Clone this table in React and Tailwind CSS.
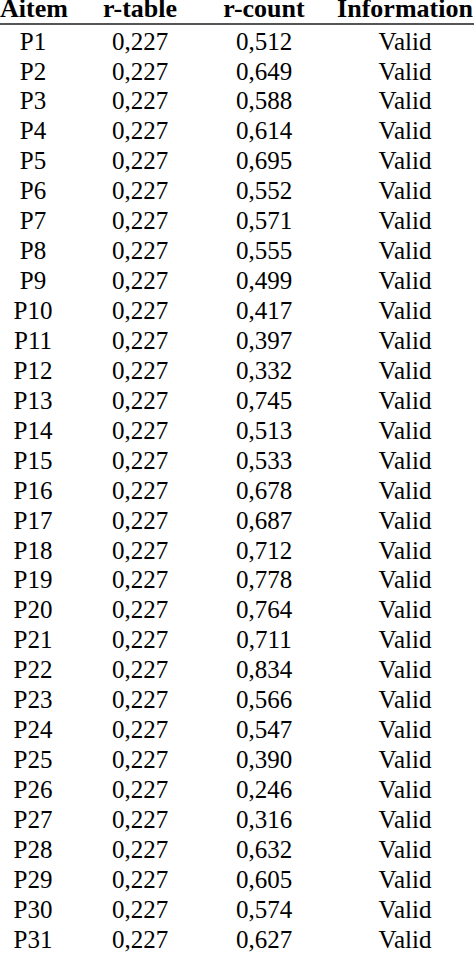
import React from "react";

const rows = [
  ["P1", "0,512"],
  ["P2", "0,649"],
  ["P3", "0,588"],
  ["P4", "0,614"],
  ["P5", "0,695"],
  ["P6", "0,552"],
  ["P7", "0,571"],
  ["P8", "0,555"],
  ["P9", "0,499"],
  ["P10", "0,417"],
  ["P11", "0,397"],
  ["P12", "0,332"],
  ["P13", "0,745"],
  ["P14", "0,513"],
  ["P15", "0,533"],
  ["P16", "0,678"],
  ["P17", "0,687"],
  ["P18", "0,712"],
  ["P19", "0,778"],
  ["P20", "0,764"],
  ["P21", "0,711"],
  ["P22", "0,834"],
  ["P23", "0,566"],
  ["P24", "0,547"],
  ["P25", "0,390"],
  ["P26", "0,246"],
  ["P27", "0,316"],
  ["P28", "0,632"],
  ["P29", "0,605"],
  ["P30", "0,574"],
  ["P31", "0,627"],
];

const App = () => {
  return (
    <div
      className="w-[474px] h-[953px] overflow-hidden bg-white text-black"
      style={{ fontFamily: '"Liberation Serif", "Times New Roman", serif' }}
    >
      <div className="w-[496px]">
        <div className="flex h-[25px] border-b-2 border-[#555] text-[26px] font-bold leading-[18px]">
          <div className="w-[66px] shrink-0 text-center whitespace-nowrap">Aitem</div>
          <div className="w-[148px] shrink-0 text-center whitespace-nowrap">r-table</div>
          <div className="w-[100px] shrink-0 text-center whitespace-nowrap">r-count</div>
          <div className="w-[182px] shrink-0 text-center whitespace-nowrap">Information</div>
        </div>
        <div className="mt-[1.6px] text-[25px] leading-[29.93px]">
          {rows.map(([item, count]) => (
            <div key={item} className="flex">
              <div className="w-[66px] shrink-0 text-center">{item}</div>
              <div className="w-[148px] shrink-0 text-center">0,227</div>
              <div className="w-[100px] shrink-0 text-center">{count}</div>
              <div className="w-[182px] shrink-0 text-center">Valid</div>
            </div>
          ))}
        </div>
      </div>
    </div>
  );
};

export default App;
